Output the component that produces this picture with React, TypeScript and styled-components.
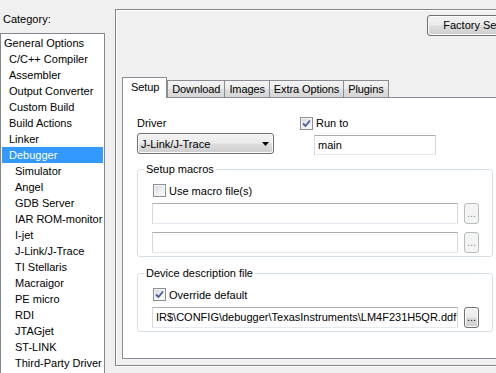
import * as React from 'react';
import styled, { createGlobalStyle } from 'styled-components';

const GlobalStyle = createGlobalStyle`
  body {
    margin: 0;
    background: #f0f0f0;
    font-family: 'Liberation Sans', Arial, sans-serif;
    font-size: 11px;
    color: #000;
  }
`;

const Dialog = styled.div`
  display: flex;
  width: 496px;
  height: 373px;
  overflow: hidden;
  background: #f0f0f0;
`;

const CategoryColumn = styled.div`
  display: flex;
  flex-direction: column;
  flex: 0 0 105px;
`;

const CategoryLabel = styled.div`
  padding: 12px 0 0 3px;
  line-height: 14px;
  height: 14px;
`;

const ListBox = styled.ul`
  flex: 1;
  margin: 7px 0 0;
  padding: 1px 0 0;
  list-style: none;
  background: #fff;
  border: 1px solid #828790;
  border-bottom: none;
`;

const ListItem = styled.li<{ $level: number; $selected?: boolean }>`
  height: 16px;
  line-height: 16px;
  margin: 0 1px;
  white-space: nowrap;
  padding-left: ${p => [2, 7, 13][p.$level]}px;
  background: ${p => (p.$selected ? '#3399ff' : 'transparent')};
  color: ${p => (p.$selected ? '#fff' : '#000')};
`;

const OptionsFrame = styled.div`
  flex: 0 0 440px;
  box-sizing: border-box;
  height: 357px;
  margin: 9px 0 0 10px;
  padding: 5px 6px 6px;
  border: 1px solid #858585;
  box-shadow: inset 1px 1px 0 #fff, 1px 1px 0 #fff;
  display: flex;
  flex-direction: column;
`;

const FrameHeader = styled.div`
  display: flex;
  justify-content: flex-end;
  padding-right: 9px;
  height: 21px;
  margin-bottom: 41px;
`;

const PushButton = styled.button<{ $width: number; $disabled?: boolean }>`
  box-sizing: border-box;
  width: ${p => p.$width}px;
  height: 21px;
  padding: 0;
  font: inherit;
  color: ${p => (p.$disabled ? '#8d8d8d' : '#000')};
  border: 1px solid ${p => (p.$disabled ? '#b6bcc0' : '#707070')};
  border-radius: 3px;
  background: ${p =>
    p.$disabled
      ? '#f4f4f4'
      : 'linear-gradient(#f2f2f2 0%, #ebebeb 48%, #dddddd 52%, #cfcfcf 100%)'};
  box-shadow: inset 0 0 0 1px ${p => (p.$disabled ? '#f4f4f4' : '#fbfbfb')};
  white-space: nowrap;
  line-height: 17px;
`;

const TabStrip = styled.div`
  display: flex;
  align-items: flex-end;
  height: 21px;
  margin-bottom: -1px;
  position: relative;
  z-index: 1;
`;

const Tab = styled.div<{ $active?: boolean }>`
  box-sizing: border-box;
  height: ${p => (p.$active ? 21 : 17)}px;
  margin-bottom: ${p => (p.$active ? 0 : 1)}px;
  margin-left: ${p => (p.$active ? 0 : -1)}px;
  padding: ${p => (p.$active ? '0 7px 1px 8px' : '0 4px')};
  line-height: ${p => (p.$active ? 19 : 16)}px;
  border: 1px solid #898c95;
  border-bottom: none;
  background: ${p =>
    p.$active ? '#fff' : 'linear-gradient(#f3f3f3 0%, #ebebeb 50%, #dedede 52%, #d6d6d6 100%)'};
  white-space: nowrap;
  letter-spacing: -0.1px;
  &:nth-child(2) {
    margin-left: 0;
  }
`;

const TabPanel = styled.div`
  box-sizing: border-box;
  height: 262px;
  padding: 18px 14px 0;
  border: 1px solid #898c95;
  background: #fff;
  display: flex;
  flex-direction: column;
`;

const TopRow = styled.div`
  display: flex;
`;

const DriverColumn = styled.div`
  display: flex;
  flex-direction: column;
  width: 137px;
  margin-right: 26px;
`;

const FieldLabel = styled.div`
  line-height: 14px;
  height: 14px;
  margin-bottom: 3px;
`;

const ComboBox = styled.div`
  box-sizing: border-box;
  height: 21px;
  display: flex;
  align-items: center;
  justify-content: space-between;
  padding: 0 4px 0 3px;
  border: 1px solid #707070;
  border-radius: 3px;
  background: linear-gradient(#f2f2f2 0%, #ebebeb 48%, #dddddd 52%, #cfcfcf 100%);
  box-shadow: inset 0 0 0 1px #fafafa;
`;

const RunToColumn = styled.div`
  display: flex;
  flex-direction: column;
`;

const CheckRow = styled.label`
  display: flex;
  align-items: center;
  gap: 3px;
  height: 14px;
  line-height: 14px;
  white-space: nowrap;
`;

const CheckBox = styled.span`
  box-sizing: border-box;
  display: inline-flex;
  align-items: center;
  justify-content: center;
  width: 13px;
  height: 13px;
  border: 1px solid #8e8f8f;
  background: linear-gradient(135deg, #d2d6dc 0%, #eef0f3 60%, #fbfbfb 100%);
  box-shadow: inset 0 0 0 1px #f4f4f4;
`;

const TextField = styled.div<{ $width: number; $height?: number }>`
  box-sizing: border-box;
  width: ${p => p.$width}px;
  height: ${p => p.$height ?? 21}px;
  padding: 0 3px;
  line-height: ${p => (p.$height ?? 21) - 2}px;
  border: 1px solid #abadb3;
  border-color: #abadb3 #d5d9de #e3e9ef #d5d9de;
  background: #fff;
  overflow: hidden;
  white-space: nowrap;
`;

const RunToField = styled(TextField)`
  margin: 5px 0 0 14px;
`;

const GroupBox = styled.div<{ $top: number }>`
  position: relative;
  margin-top: ${p => p.$top}px;
  padding: 14px 0 3px 14px;
  width: 356px;
  box-sizing: border-box;
  border: 1px solid #d5dfe5;
  border-radius: 3px;
  display: flex;
  flex-direction: column;
`;

const GroupTitle = styled.span`
  position: absolute;
  top: -8px;
  left: 6px;
  padding: 0 2px;
  line-height: 14px;
  background: #fff;
`;

const GroupCheck = styled(CheckRow)`
  margin-left: 1px;
  margin-bottom: 6px;
  height: 13px;
`;

const BrowseRow = styled.div<{ $gap?: number }>`
  display: flex;
  gap: 6px;
  margin-top: ${p => p.$gap ?? 0}px;
`;

const Check = () => (
  <svg width="9" height="9" viewBox="0 0 9 9">
    <path d="M1 4.5 L3.5 7 L8 1.5" fill="none" stroke="#4a5f97" strokeWidth="1.8" />
  </svg>
);

const categories: [string, number][] = [
  ['General Options', 0],
  ['C/C++ Compiler', 1],
  ['Assembler', 1],
  ['Output Converter', 1],
  ['Custom Build', 1],
  ['Build Actions', 1],
  ['Linker', 1],
  ['Debugger', 1],
  ['Simulator', 2],
  ['Angel', 2],
  ['GDB Server', 2],
  ['IAR ROM-monitor', 2],
  ['I-jet', 2],
  ['J-Link/J-Trace', 2],
  ['TI Stellaris', 2],
  ['Macraigor', 2],
  ['PE micro', 2],
  ['RDI', 2],
  ['JTAGjet', 2],
  ['ST-LINK', 2],
  ['Third-Party Driver', 2],
];

const tabs = ['Setup', 'Download', 'Images', 'Extra Options', 'Plugins'];

export default function App() {
  return (
    <Dialog>
      <GlobalStyle />
      <CategoryColumn>
        <CategoryLabel>Category:</CategoryLabel>
        <ListBox>
          {categories.map(([name, level]) => (
            <ListItem key={name} $level={level} $selected={name === 'Debugger'}>
              {name}
            </ListItem>
          ))}
        </ListBox>
      </CategoryColumn>

      <OptionsFrame>
        <FrameHeader>
          <PushButton $width={112}>Factory Settings</PushButton>
        </FrameHeader>
        <TabStrip>
          {tabs.map(t => (
            <Tab key={t} $active={t === 'Setup'}>
              {t}
            </Tab>
          ))}
        </TabStrip>
        <TabPanel>
          <TopRow>
            <DriverColumn>
              <FieldLabel>Driver</FieldLabel>
              <ComboBox>
                <span>J-Link/J-Trace</span>
                <svg width="7" height="4" viewBox="0 0 7 4">
                  <polygon points="0,0 7,0 3.5,4" fill="#000" />
                </svg>
              </ComboBox>
            </DriverColumn>
            <RunToColumn>
              <CheckRow>
                <CheckBox>
                  <Check />
                </CheckBox>
                Run to
              </CheckRow>
              <RunToField $width={122} $height={20}>
                main
              </RunToField>
            </RunToColumn>
          </TopRow>

          <GroupBox $top={14}>
            <GroupTitle>Setup macros</GroupTitle>
            <GroupCheck>
              <CheckBox />
              Use macro file(s)
            </GroupCheck>
            <BrowseRow>
              <TextField $width={306} />
              <PushButton $width={15} $disabled>
                ...
              </PushButton>
            </BrowseRow>
            <BrowseRow $gap={8}>
              <TextField $width={306} />
              <PushButton $width={15} $disabled>
                ...
              </PushButton>
            </BrowseRow>
          </GroupBox>

          <GroupBox $top={16}>
            <GroupTitle>Device description file</GroupTitle>
            <GroupCheck>
              <CheckBox>
                <Check />
              </CheckBox>
              Override default
            </GroupCheck>
            <BrowseRow>
              <TextField $width={306}>IR$\CONFIG\debugger\TexasInstruments\LM4F231H5QR.ddf</TextField>
              <PushButton $width={15}>...</PushButton>
            </BrowseRow>
          </GroupBox>
        </TabPanel>
      </OptionsFrame>
    </Dialog>
  );
}
